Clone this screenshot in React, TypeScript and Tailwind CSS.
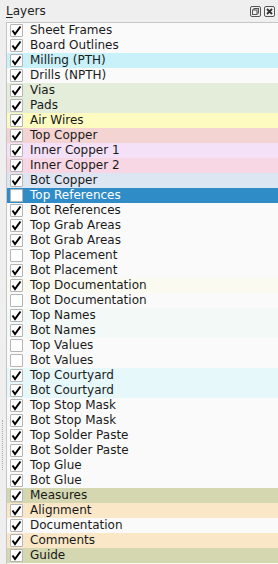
import React from 'react';

type Layer = { name: string; checked: boolean; bg: string; selected?: boolean };

const layers: Layer[] = [
  { name: 'Sheet Frames', checked: true, bg: 'bg-[#fafafa]' },
  { name: 'Board Outlines', checked: true, bg: 'bg-[#fafafa]' },
  { name: 'Milling (PTH)', checked: true, bg: 'bg-[#c8f1f9]' },
  { name: 'Drills (NPTH)', checked: true, bg: 'bg-[#fafafa]' },
  { name: 'Vias', checked: true, bg: 'bg-[#e3edd9]' },
  { name: 'Pads', checked: true, bg: 'bg-[#e3edd9]' },
  { name: 'Air Wires', checked: true, bg: 'bg-[#fdfbbf]' },
  { name: 'Top Copper', checked: true, bg: 'bg-[#f4d3d3]' },
  { name: 'Inner Copper 1', checked: true, bg: 'bg-[#f4e0f7]' },
  { name: 'Inner Copper 2', checked: true, bg: 'bg-[#f8d7e4]' },
  { name: 'Bot Copper', checked: true, bg: 'bg-[#dce5f2]' },
  { name: 'Top References', checked: false, bg: 'bg-[#308cc6]', selected: true },
  { name: 'Bot References', checked: true, bg: 'bg-[#fafafa]' },
  { name: 'Top Grab Areas', checked: true, bg: 'bg-[#fafafa]' },
  { name: 'Bot Grab Areas', checked: true, bg: 'bg-[#fafafa]' },
  { name: 'Top Placement', checked: false, bg: 'bg-[#fafafa]' },
  { name: 'Bot Placement', checked: true, bg: 'bg-[#fafafa]' },
  { name: 'Top Documentation', checked: true, bg: 'bg-[#fafaf0]' },
  { name: 'Bot Documentation', checked: false, bg: 'bg-[#fafafa]' },
  { name: 'Top Names', checked: true, bg: 'bg-[#f3f9f6]' },
  { name: 'Bot Names', checked: true, bg: 'bg-[#f3f9f6]' },
  { name: 'Top Values', checked: false, bg: 'bg-[#fafafa]' },
  { name: 'Bot Values', checked: false, bg: 'bg-[#fafafa]' },
  { name: 'Top Courtyard', checked: true, bg: 'bg-[#e6f8fa]' },
  { name: 'Bot Courtyard', checked: true, bg: 'bg-[#e6f8fa]' },
  { name: 'Top Stop Mask', checked: true, bg: 'bg-[#fafafa]' },
  { name: 'Bot Stop Mask', checked: true, bg: 'bg-[#fafafa]' },
  { name: 'Top Solder Paste', checked: true, bg: 'bg-[#fafafa]' },
  { name: 'Bot Solder Paste', checked: true, bg: 'bg-[#fafafa]' },
  { name: 'Top Glue', checked: true, bg: 'bg-[#fafafa]' },
  { name: 'Bot Glue', checked: true, bg: 'bg-[#fafafa]' },
  { name: 'Measures', checked: true, bg: 'bg-[#d5d7b0]' },
  { name: 'Alignment', checked: true, bg: 'bg-[#f9e7c7]' },
  { name: 'Documentation', checked: true, bg: 'bg-[#fafafa]' },
  { name: 'Comments', checked: true, bg: 'bg-[#f9e7c7]' },
  { name: 'Guide', checked: true, bg: 'bg-[#d5d7b0]' },
];

const CheckBox: React.FC<{ checked: boolean }> = ({ checked }) => (
  <div className="w-[13px] h-[13px] shrink-0 bg-white border border-[#b5b5b5] rounded-[1px] flex items-center justify-center">
    {checked && (
      <svg width="11" height="11" viewBox="0 0 11 11">
        <path d="M1.5 5.5 L4 9 L9.5 1.5" fill="none" stroke="#000" strokeWidth="2" />
      </svg>
    )}
  </div>
);

const App: React.FC = () => {
  return (
    <div
      className="w-[278px] h-[564px] bg-[#efefef] flex flex-col overflow-hidden relative"
      style={{ fontFamily: '"DejaVu Sans", sans-serif' }}
    >
      <div className="h-[22px] flex items-center pl-[6px] pr-[3px] shrink-0">
        <span className="text-[12px] text-[#222]">
          <span className="underline underline-offset-2">L</span>ayers
        </span>
        <div className="ml-auto flex gap-[3px]">
          <svg width="11" height="11" viewBox="0 0 11 11">
            <rect x="0.5" y="0.5" width="10" height="10" rx="1.5" fill="none" stroke="#555" />
            <rect x="4" y="2.5" width="4.5" height="4.5" fill="none" stroke="#555" />
            <rect x="2.5" y="4" width="4.5" height="4.5" fill="#efefef" stroke="#555" />
          </svg>
          <svg width="11" height="11" viewBox="0 0 11 11">
            <rect x="0.5" y="0.5" width="10" height="10" rx="1.5" fill="none" stroke="#555" />
            <path d="M3 3 L8 8 M8 3 L3 8" stroke="#333" strokeWidth="1.8" />
          </svg>
        </div>
      </div>
      <div className="absolute left-[2px] top-[420px] h-[50px] border-l border-dotted border-[#aaa]" />
      <div className="ml-[6px] flex-1 border-t border-l border-[#c6c6c6] bg-[#fafafa] overflow-hidden">
        {layers.map((l) => (
          <div key={l.name} className={`h-[15px] flex items-center pl-[3px] ${l.bg}`}>
            <CheckBox checked={l.checked} />
            <span
              className={`ml-[7px] text-[12px] leading-[15px] whitespace-nowrap ${
                l.selected ? 'text-white' : 'text-[#1a1a1a]'
              }`}
            >
              {l.name}
            </span>
          </div>
        ))}
      </div>
    </div>
  );
};

export default App;
